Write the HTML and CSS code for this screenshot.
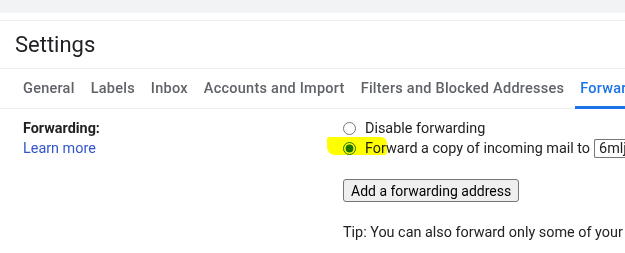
FILE: index.html
```html
<!DOCTYPE html>
<html lang="en">

<head>
    <meta charset="UTF-8">
    <meta name="viewport" content="width=device-width, initial-scale=1.0">
    <title>Settings</title>
    <link rel="stylesheet" href="styles.css">
</head>

<body>
    <!-- search bar bottom edge -->
    <div class="searchbar"></div>

    <div class="page">
        <h2 class="title">Settings</h2>

        <!-- Tab links -->
        <div class="tabs">
            <a class="tab">General</a>
            <a class="tab">Labels</a>
            <a class="tab">Inbox</a>
            <a class="tab">Accounts and Import</a>
            <a class="tab">Filters and Blocked Addresses</a>
            <a class="tab active">Forwar</a>
        </div>

        <!-- Forwarding row -->
        <div class="row">
            <div class="label">
                <b>Forwarding:</b>
                <a class="learn">Learn more</a>
            </div>
            <div class="options">
                <label class="opt"><input type="radio" name="fwd"> Disable forwarding</label>
                <label class="opt">
                    <span class="marker"></span>
                    <input type="radio" name="fwd" checked> Forward a copy of incoming mail to
                    <span class="addr">6mlj</span>
                </label>
                <button class="addbtn">Add a forwarding address</button>
                <p class="tip">Tip: You can also forward only some of your</p>
            </div>
        </div>
    </div>
</body>

</html>
```

FILE: styles.css
```css
body {
    margin: 0;
    overflow: hidden;
    font-family: Roboto, "Liberation Sans", Arial, sans-serif;
    color: #222;
    background: #fff;
}

/* grey search bar, only its bottom shows */
.searchbar {
    height: 13px;
    margin-left: -4px;
    background-color: #f1f3f4;
    border-bottom-left-radius: 8px;
}

.page {
    margin-top: 7px;
    border-top: 1px solid #eceff1;
    width: 625px;
    overflow: hidden;
}

.title {
    margin: 0;
    padding: 11px 0 0 15px;
    height: 36px;
    font-weight: 400;
    font-size: 22px;
    color: #202124;
    border-bottom: 1px solid #eceff1;
}

/* Style the tab bar */
.tabs {
    display: flex;
    height: 39px;
    padding-left: 15px;
    border-bottom: 1px solid #eceff1;
}

.tab {
    position: relative;
    padding: 0 8px;
    line-height: 39px;
    font-size: 14.5px;
    font-weight: 500;
    letter-spacing: 0.25px;
    color: #5f6368;
    white-space: nowrap;
}

.tab.active {
    color: #1a73e8;
    padding-right: 40px;
}

.tab.active::after {
    content: "";
    position: absolute;
    left: 3px;
    right: 0;
    bottom: -1px;
    height: 3px;
    background-color: #1a73e8;
}

/* Forwarding settings row */
.row {
    display: flex;
    padding-top: 10px;
    font-size: 14.4px;
}

.label {
    width: 320px;
    flex-shrink: 0;
    padding-left: 23px;
    line-height: 20px;
}

.label b {
    display: block;
}

.learn {
    color: #3355cc;
}

.options {
    flex: 1;
    margin-top: -1px;
}

.opt {
    position: relative;
    display: flex;
    align-items: center;
    height: 20px;
    white-space: nowrap;
    color: #222;
}

.opt input {
    position: relative;
    margin: 0 9px 0 0;
    width: 13px;
    height: 13px;
    accent-color: #1a73e8;
}

/* yellow marker over the second option */
.marker {
    position: absolute;
    left: -16px;
    top: -1px;
    width: 60px;
    height: 18px;
    background-color: #ffff00;
    border-radius: 2px 6px 3px 8px;
    mix-blend-mode: multiply;
    z-index: 1;
}

.addr {
    display: inline-block;
    margin-left: 4px;
    padding: 0 30px 0 4px;
    line-height: 17px;
    border: 1px solid #767676;
    border-right: none;
    border-radius: 2px 0 0 2px;
}

.addbtn {
    display: block;
    margin-top: 21px;
    height: 23px;
    padding: 0 7px;
    font-family: Roboto, "Liberation Sans", Arial, sans-serif;
    font-size: 14px;
    color: #000;
    background-color: #efefef;
    border: 1px solid #767676;
    border-radius: 3px;
}

.tip {
    margin: 22px 0 0;
    white-space: nowrap;
    color: #222;
}
```
